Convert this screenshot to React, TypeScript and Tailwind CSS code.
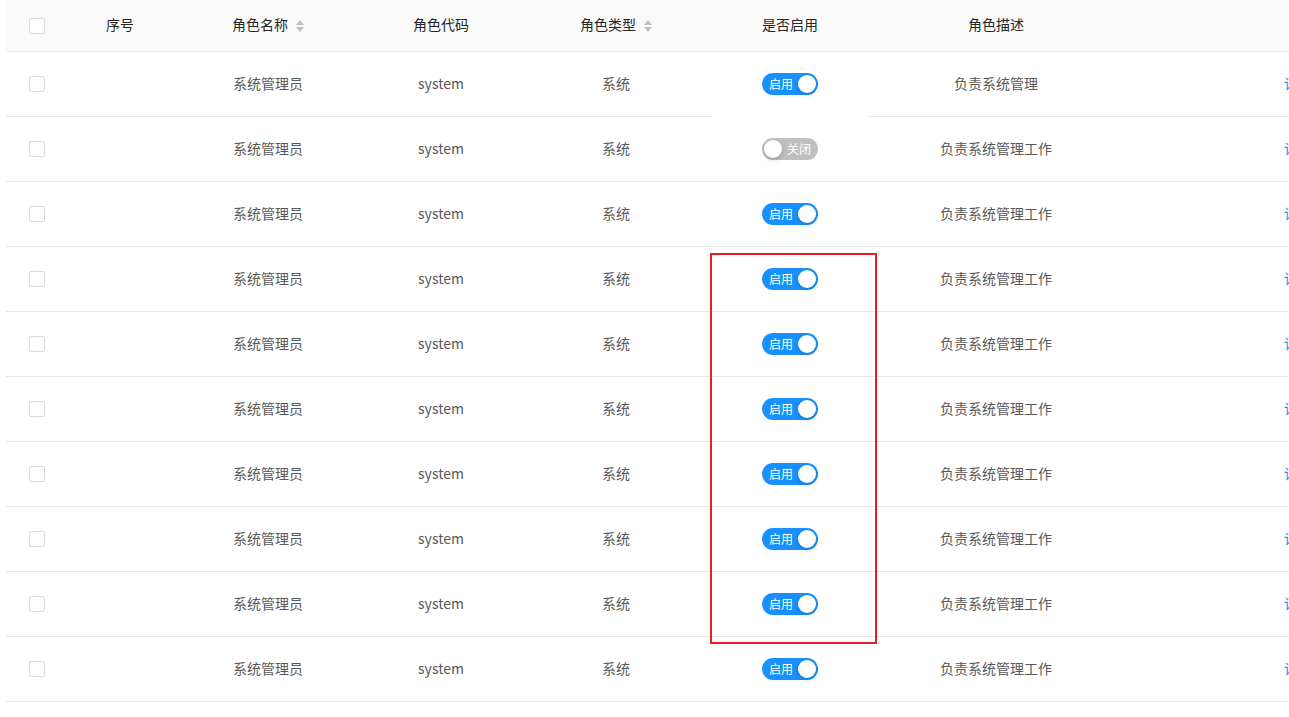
import type { ReactNode } from "react";

type Role = {
  id: number;
  name: string;
  code: string;
  type: string;
  enabled: boolean;
  desc: string;
};

const roles: Role[] = Array.from({ length: 10 }, (_, i) => ({
  id: i + 1,
  name: "系统管理员",
  code: "system",
  type: "系统",
  enabled: i !== 1,
  desc: i === 0 ? "负责系统管理" : "负责系统管理工作",
}));

function Checkbox() {
  return (
    <div className="flex items-center justify-center pl-[1px]">
      <span className="block h-4 w-4 rounded-[2px] border border-[#d9d9d9] bg-white" />
    </div>
  );
}

function SortIcon() {
  return (
    <span className="ml-[8px] inline-flex flex-col items-center gap-[2px] align-middle">
      <svg width="8" height="5" viewBox="0 0 8 5" className="block">
        <path d="M4 0 L8 5 L0 5 Z" fill="#bfbfbf" />
      </svg>
      <svg width="8" height="5" viewBox="0 0 8 5" className="block">
        <path d="M0 0 L8 0 L4 5 Z" fill="#bfbfbf" />
      </svg>
    </span>
  );
}

function Switch({ on }: { on: boolean }) {
  const handle = (
    <span className="h-[18px] w-[18px] rounded-full bg-white shadow-[0_2px_4px_0_rgba(0,35,11,0.2)]" />
  );
  if (on) {
    return (
      <span className="inline-flex h-[22px] w-[56px] items-center rounded-full bg-[#1890ff] pl-[7px] pr-[2px] align-middle text-[12px] leading-none text-white">
        <span className="w-[24px]">启用</span>
        <span className="ml-auto flex">{handle}</span>
      </span>
    );
  }
  return (
    <span className="inline-flex h-[22px] w-[56px] items-center rounded-full bg-[#bfbfbf] pl-[2px] pr-[7px] align-middle text-[12px] leading-none text-white">
      <span className="flex">{handle}</span>
      <span className="ml-auto w-[24px]">关闭</span>
    </span>
  );
}

function Th({ children }: { children?: ReactNode }) {
  return (
    <th className="h-[51px] border-b border-[#e8e8e8] bg-[#fafafa] p-0 pb-[2px] text-center text-[14px] font-normal text-[#262626]">
      {children}
    </th>
  );
}

export default function App() {
  return (
    <div
      className="relative h-[717px] w-[1289px] overflow-hidden bg-white pl-[6px]"
      style={{ fontFamily: '"Noto Sans CJK SC", "Noto Sans", sans-serif' }}
    >
      <table className="w-[1420px] table-fixed border-collapse">
        <colgroup>
          <col className="w-[60px]" />
          <col className="w-[108px]" />
          <col className="w-[188px]" />
          <col className="w-[158px]" />
          <col className="w-[192px]" />
          <col className="w-[156px]" />
          <col className="w-[256px]" />
          <col className="w-[302px]" />
        </colgroup>
        <thead>
          <tr>
            <Th>
              <div className="pt-[3px]">
                <Checkbox />
              </div>
            </Th>
            <Th>序号</Th>
            <Th>
              角色名称
              <SortIcon />
            </Th>
            <Th>角色代码</Th>
            <Th>
              角色类型
              <SortIcon />
            </Th>
            <Th>是否启用</Th>
            <Th>角色描述</Th>
            <Th />
          </tr>
        </thead>
        <tbody className="text-[14px] text-[#595959]">
          {roles.map((r, i) => {
            const cell = "h-[65px] border-b border-[#e8e8e8] p-0 text-center";
            return (
              <tr key={r.id}>
                <td className={cell}>
                  <Checkbox />
                </td>
                <td className={cell}></td>
                <td className={cell}>{r.name}</td>
                <td className={cell}>{r.code}</td>
                <td className={cell}>{r.type}</td>
                <td className={i === 0 ? cell + " border-b-white" : cell}>
                  <Switch on={r.enabled} />
                </td>
                <td className={cell}>{r.desc}</td>
                <td className={cell + " whitespace-nowrap pl-[160px] text-left text-[#1890ff]"}>
                  详情 编辑
                </td>
              </tr>
            );
          })}
        </tbody>
      </table>

      {/* 标注框 */}
      <div className="pointer-events-none absolute left-[710px] top-[253px] h-[391px] w-[167px] border-2 border-[#ea1c24]" />
    </div>
  );
}
